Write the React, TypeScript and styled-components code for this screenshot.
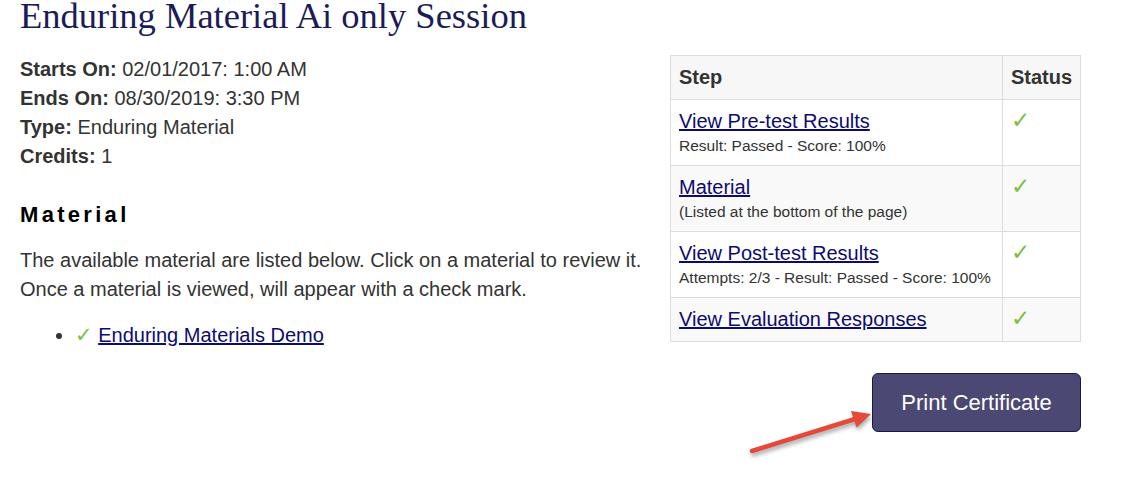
import React from "react";
import styled, { createGlobalStyle } from "styled-components";

const GlobalStyle = createGlobalStyle`
  html, body {
    margin: 0;
    padding: 0;
    background: #ffffff;
  }
  body {
    font-family: "Liberation Sans", Arial, sans-serif;
    color: #333333;
  }
`;

const steps = [
  { label: "View Pre-test Results", note: "Result: Passed - Score: 100%", striped: false },
  { label: "Material", note: "(Listed at the bottom of the page)", striped: true },
  { label: "View Post-test Results", note: "Attempts: 2/3 - Result: Passed - Score: 100%", striped: false },
  { label: "View Evaluation Responses", note: "", striped: true },
];

const details = [
  { key: "Starts On:", value: "02/01/2017: 1:00 AM" },
  { key: "Ends On:", value: "08/30/2019: 3:30 PM" },
  { key: "Type:", value: "Enduring Material" },
  { key: "Credits:", value: "1" },
];

const App = () => {
  return (
    <Page>
      <GlobalStyle />
      <Title>Enduring Material Ai only Session</Title>
      <Columns>
        <LeftCol>
          <Details>
            {details.map((d) => (
              <DetailLine key={d.key}>
                <b>{d.key}</b> {d.value}
              </DetailLine>
            ))}
          </Details>
          <SectionHeading>Material</SectionHeading>
          <Paragraph>
            The available material are listed below. Click on a material to review it.
            <br />
            Once a material is viewed, will appear with a check mark.
          </Paragraph>
          <MaterialList>
            <li>
              <Check sz="21px">✓</Check> <Link href="#">Enduring Materials Demo</Link>
            </li>
          </MaterialList>
        </LeftCol>
        <RightCol>
          <StepTable>
            <thead>
              <tr>
                <HeadCell w="332px">Step</HeadCell>
                <HeadCell>Status</HeadCell>
              </tr>
            </thead>
            <tbody>
              {steps.map((s) => (
                <Row key={s.label} striped={s.striped}>
                  <Cell>
                    <Link href="#">{s.label}</Link>
                    {s.note && <Note>{s.note}</Note>}
                  </Cell>
                  <Cell>
                    <Check sz="23px">✓</Check>
                  </Cell>
                </Row>
              ))}
            </tbody>
          </StepTable>
          <PrintButton>Print Certificate</PrintButton>
        </RightCol>
      </Columns>
      <Arrow width="130" height="56" viewBox="0 0 130 56">
        <line x1="7" y1="46" x2="110" y2="14" stroke="#e5493a" strokeWidth="4.5" strokeLinecap="round" />
        <polygon points="126,9 111.5,22.5 106,6" fill="#e5493a" />
      </Arrow>
    </Page>
  );
};

export default App;

const Page = styled.div`
  position: relative;
  width: 1125px;
  height: 485px;
  box-sizing: border-box;
  padding: 0 44px 0 20px;
  overflow: hidden;
`;

const Title = styled.h1`
  margin: -2px 0 21px;
  font-family: "Liberation Serif", "Times New Roman", serif;
  font-weight: normal;
  font-size: 36.5px;
  line-height: 36px;
  color: #1b1b57;
  white-space: nowrap;
`;

const Columns = styled.div`
  display: flex;
  gap: 16px;
`;

const LeftCol = styled.div`
  flex: 1;
  min-width: 0;
`;

const RightCol = styled.div`
  width: 411px;
  display: flex;
  flex-direction: column;
  align-items: flex-end;
`;

const Details = styled.div`
  font-size: 20px;
  line-height: 29px;
`;

const DetailLine = styled.div`
  b {
    font-weight: bold;
  }
`;

const SectionHeading = styled.h3`
  margin: 30px 0 0;
  font-size: 22px;
  line-height: 28px;
  font-weight: bold;
  letter-spacing: 3.3px;
  color: #000000;
`;

const Paragraph = styled.p`
  margin: 17px 0 0;
  font-size: 20px;
  line-height: 29px;
  white-space: nowrap;
`;

const MaterialList = styled.ul`
  margin: 17px 0 0;
  padding-left: 55px;
  font-size: 20px;
  line-height: 29px;
`;

const Check = styled.span<{ sz: string }>`
  font-family: "DejaVu Sans", sans-serif;
  font-size: ${({ sz }) => sz};
  line-height: 1;
  color: #7cbf3f;
`;

const Link = styled.a`
  color: #0c0c6e;
  text-decoration: underline;
`;

const StepTable = styled.table`
  width: 411px;
  border-collapse: collapse;
  border: 1px solid #dddddd;
  font-size: 20px;
  line-height: 27px;
`;

const HeadCell = styled.th<{ w?: string }>`
  width: ${({ w }) => w || "auto"};
  padding: 8px;
  text-align: left;
  font-weight: bold;
  background: #f7f7f7;
  border: 1px solid #dddddd;
  box-sizing: border-box;
`;

const Row = styled.tr<{ striped: boolean }>`
  background: ${({ striped }) => (striped ? "#f9f9f9" : "#ffffff")};
`;

const Cell = styled.td`
  padding: 8px;
  vertical-align: top;
  border: 1px solid #dddddd;
`;

const Note = styled.div`
  font-size: 15.5px;
  line-height: 22px;
  color: #333333;
  white-space: nowrap;
`;

const PrintButton = styled.button`
  margin-top: 31px;
  width: 209px;
  height: 59px;
  background: #4b4873;
  color: #ffffff;
  border: 1.5px solid #1b1a45;
  border-radius: 6px;
  font-family: "Liberation Sans", Arial, sans-serif;
  font-size: 22px;
  cursor: pointer;
`;

const Arrow = styled.svg`
  position: absolute;
  left: 745px;
  top: 405px;
  overflow: visible;
  filter: drop-shadow(1px 3px 2px rgba(0, 0, 0, 0.35));
`;
